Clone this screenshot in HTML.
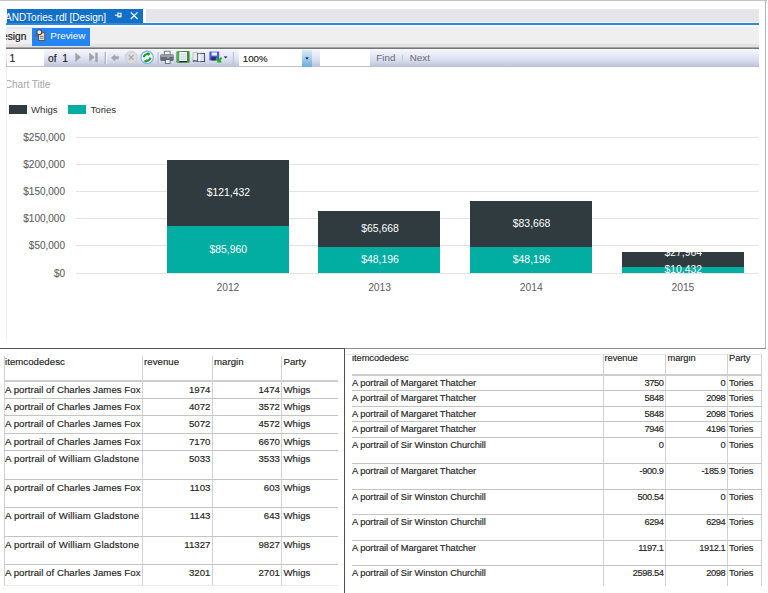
<!DOCTYPE html>
<html><head><meta charset="utf-8">
<style>
*{margin:0;padding:0;box-sizing:border-box}
html,body{width:768px;height:593px;overflow:hidden;background:#fff;font-family:"Liberation Sans",sans-serif;}
.a{position:absolute}
.t{position:absolute;white-space:nowrap;line-height:1}
.s{-webkit-text-stroke:0.16px currentColor}
.ls{letter-spacing:0.04px}
.lg{letter-spacing:0.17px}
.rs{letter-spacing:-0.06px}
.rn{letter-spacing:-0.4px}
.r{text-align:right}
.c{text-align:center}
</style></head><body>

<div class="a" style="left:0px;top:0px;width:767px;height:1px;background:#c4c4c4;"></div>
<div class="a" style="left:765px;top:0px;width:1px;height:349px;background:#b4b4b4;"></div>
<div class="a" style="left:146px;top:9px;width:613px;height:13px;background:#e6e6ea;"></div>
<div class="a" style="left:146px;top:22px;width:613px;height:1px;background:#f2f2f6;"></div>
<div class="a" style="left:7px;top:9px;width:136px;height:16px;background:#1370c8;overflow:hidden">
<div class="t" style="left:-2px;top:4px;font-size:10px;color:#fff;">ANDTories.rdl [Design]</div>
</div>
<div class="a" style="left:6px;top:23px;width:753px;height:2px;background:#3089d6;"></div>
<div class="a" style="left:6px;top:25px;width:753px;height:22px;background:#efeff0;"></div>
<div class="a" style="left:6px;top:25px;width:753px;height:2px;background:#f8f8f9;"></div>
<div class="a" style="left:6px;top:27px;width:26px;height:2px;background:#e4e4ea;"></div>
<div class="a" style="left:6px;top:44px;width:753px;height:3px;background:#e3e3e4;"></div>
<div class="a" style="left:6px;top:26px;width:26px;height:20px;overflow:hidden">
<div class="t" style="left:-4.0px;top:6px;font-size:10.2px;color:#222;-webkit-text-stroke:0.2px #222">esign</div>
</div>
<div class="a" style="left:32px;top:28px;width:58px;height:17.5px;background:#2384f2;"></div>
<div class="t" style="left:50.3px;top:31.2px;font-size:9.9px;color:#fff;">Preview</div>
<div class="a" style="left:6px;top:47px;width:753px;height:1px;background:#a4a4a4;"></div>
<div class="a" style="left:6px;top:48px;width:753px;height:1px;background:#767676;"></div>
<div class="a" style="left:6px;top:49px;width:753px;height:18px;background:linear-gradient(#f7f8fc,#e9ecf8 30%,#dde1f4 55%,#c9cde0 85%,#babed2);"></div>
<div class="a" style="left:7px;top:49px;width:37px;height:17px;background:#fff;"></div>
<div class="t" style="left:9.6px;top:54px;font-size:10.3px;color:#222;-webkit-text-stroke:0.15px #222">1</div>
<div class="t" style="left:48px;top:54px;font-size:10.3px;color:#222;-webkit-text-stroke:0.15px #222">of&nbsp; 1</div>
<div class="a" style="left:239px;top:49px;width:63px;height:17px;background:#fff;"></div>
<div class="t" style="left:242.8px;top:54.3px;font-size:9.7px;color:#222;-webkit-text-stroke:0.15px #222">100%</div>
<div class="a" style="left:302px;top:50px;width:10px;height:17px;background:linear-gradient(#dcecf8,#68ace0);"></div>
<div class="a" style="left:320px;top:49px;width:50px;height:17px;background:#fff;"></div>
<div class="t" style="left:376.3px;top:53.3px;font-size:9.8px;color:#6a6a6a;">Find</div>
<div class="a" style="left:402px;top:55px;width:1px;height:8px;background:#c8c8d0;"></div>
<div class="t" style="left:409.8px;top:53.3px;font-size:9.8px;color:#6a6a6a;">Next</div>
<div class="a" style="left:6px;top:67px;width:1px;height:274px;background:#eeeeee;"></div>
<div class="a" style="left:7px;top:70px;width:80px;height:25px;overflow:hidden">
<div class="t" style="left:-2.2px;top:9.6px;font-size:10px;color:#a6a6a6;">Chart Title</div>
</div>
<div class="a" style="left:8.8px;top:105.2px;width:18.2px;height:9.3px;background:#2f3b3f;"></div>
<div class="t" style="left:31px;top:105px;font-size:9.6px;color:#333;">Whigs</div>
<div class="a" style="left:67.5px;top:105.2px;width:18.5px;height:9.3px;background:#02ada2;"></div>
<div class="t" style="left:90.5px;top:105px;font-size:9.6px;color:#333;">Tories</div>
<div class="a" style="left:76px;top:272.6px;width:683px;height:1px;background:#e3e3e3;"></div>
<div class="t r" style="left:0px;width:65px;top:268.60px;font-size:10px;color:#5e5e5e;-webkit-text-stroke:0.1px #5e5e5e">$0</div>
<div class="a" style="left:76px;top:245.4px;width:683px;height:1px;background:#e3e3e3;"></div>
<div class="t r" style="left:0px;width:65px;top:241.40px;font-size:10px;color:#5e5e5e;-webkit-text-stroke:0.1px #5e5e5e">$50,000</div>
<div class="a" style="left:76px;top:218.2px;width:683px;height:1px;background:#e3e3e3;"></div>
<div class="t r" style="left:0px;width:65px;top:214.20px;font-size:10px;color:#5e5e5e;-webkit-text-stroke:0.1px #5e5e5e">$100,000</div>
<div class="a" style="left:76px;top:191.0px;width:683px;height:1px;background:#e3e3e3;"></div>
<div class="t r" style="left:0px;width:65px;top:187.00px;font-size:10px;color:#5e5e5e;-webkit-text-stroke:0.1px #5e5e5e">$150,000</div>
<div class="a" style="left:76px;top:163.8px;width:683px;height:1px;background:#e3e3e3;"></div>
<div class="t r" style="left:0px;width:65px;top:159.80px;font-size:10px;color:#5e5e5e;-webkit-text-stroke:0.1px #5e5e5e">$200,000</div>
<div class="a" style="left:76px;top:136.6px;width:683px;height:1px;background:#e3e3e3;"></div>
<div class="t r" style="left:0px;width:65px;top:132.60px;font-size:10px;color:#5e5e5e;-webkit-text-stroke:0.1px #5e5e5e">$250,000</div>
<div class="a" style="left:166.5px;top:226.34px;width:122px;height:46.76px;background:#02ada2;overflow:hidden"></div>
<div class="a" style="left:166.5px;top:160.28px;width:122px;height:66.06px;background:#2f3b3f;overflow:hidden"></div>
<div class="a" style="left:166.50px;top:160.28px;width:122px;height:112.82px;overflow:hidden">
<div class="t c" style="left:0.8px;width:122px;top:84.24px;font-size:10.4px;color:#fff">$85,960</div>
<div class="t c" style="left:0.8px;width:122px;top:27.83px;font-size:10.4px;color:#fff">$121,432</div>
</div>
<div class="t c" style="left:197.90px;width:60px;top:282.6px;font-size:10.3px;color:#5e5e5e">2012</div>
<div class="a" style="left:318.2px;top:246.88px;width:122px;height:26.22px;background:#02ada2;overflow:hidden"></div>
<div class="a" style="left:318.2px;top:211.16px;width:122px;height:35.72px;background:#2f3b3f;overflow:hidden"></div>
<div class="a" style="left:318.20px;top:211.16px;width:122px;height:61.94px;overflow:hidden">
<div class="t c" style="left:0.8px;width:122px;top:43.63px;font-size:10.4px;color:#fff">$48,196</div>
<div class="t c" style="left:0.8px;width:122px;top:12.66px;font-size:10.4px;color:#fff">$65,668</div>
</div>
<div class="t c" style="left:349.60px;width:60px;top:282.6px;font-size:10.3px;color:#5e5e5e">2013</div>
<div class="a" style="left:469.8px;top:246.88px;width:122px;height:26.22px;background:#02ada2;overflow:hidden"></div>
<div class="a" style="left:469.8px;top:201.37px;width:122px;height:45.52px;background:#2f3b3f;overflow:hidden"></div>
<div class="a" style="left:469.80px;top:201.37px;width:122px;height:71.73px;overflow:hidden">
<div class="t c" style="left:0.8px;width:122px;top:53.42px;font-size:10.4px;color:#fff">$48,196</div>
<div class="t c" style="left:0.8px;width:122px;top:17.56px;font-size:10.4px;color:#fff">$83,668</div>
</div>
<div class="t c" style="left:501.20px;width:60px;top:282.6px;font-size:10.3px;color:#5e5e5e">2014</div>
<div class="a" style="left:621.5px;top:267.42px;width:122px;height:5.68px;background:#02ada2;overflow:hidden"></div>
<div class="a" style="left:621.5px;top:252.21px;width:122px;height:15.21px;background:#2f3b3f;overflow:hidden"></div>
<div class="a" style="left:621.50px;top:252.21px;width:122px;height:20.89px;overflow:hidden">
<div class="t c" style="left:0.8px;width:122px;top:12.79px;font-size:10.4px;color:#fff">$10,432</div>
<div class="t c" style="left:0.8px;width:122px;top:-4.01px;font-size:10.4px;color:#fff">$27,964</div>
</div>
<div class="t c" style="left:652.90px;width:60px;top:282.6px;font-size:10.3px;color:#5e5e5e">2015</div>
<svg class="a" style="left:0;top:0" width="460" height="70" viewBox="0 0 460 70">
<path d="M114.8 15.3h3M117.9 12.6v5M118 13.2h3v3.4h-3" stroke="#fff" stroke-width="1.1" fill="none"/><path d="M118 16.4h3.2" stroke="#fff" stroke-width="1.5"/>
<path d="M130.8 12.3l6.7 6.7M137.5 12.3l-6.7 6.7" stroke="#fff" stroke-width="1.2"/>
<rect x="38.5" y="32.8" width="6.2" height="7.6" fill="#f4f1ea" stroke="#5e5040" stroke-width="1"/>
<path d="M39.7 36.3h3.8M39.7 38.2h3.8" stroke="#6a5a46" stroke-width="0.9"/>
<circle cx="39.3" cy="32.3" r="2.5" fill="#e6e6e6" stroke="#4f4740" stroke-width="1.1"/><circle cx="38.7" cy="31.7" r="0.9" fill="#fff"/>
<path d="M37.6 34l-2.6 2.6" stroke="#8a5a30" stroke-width="1.4"/>
<path d="M75.3 52.6L80.9 57.3L75.3 62Z" fill="#a3a3a6"/>
<path d="M89.2 52.6L94.6 57.3L89.2 62Z" fill="#a3a3a6"/><rect x="95.3" y="52.6" width="2.4" height="9.4" fill="#a3a3a6"/>
<rect x="104.8" y="52" width="1" height="12" fill="#8e94aa"/><rect x="105.8" y="52" width="1" height="12" fill="#fafbff"/>
<path d="M111 57.8L115.2 54v2.3h3.6v3h-3.6v2.3Z" fill="#a5a5a8"/>
<circle cx="131.2" cy="57.4" r="6.1" fill="#dcdcde" stroke="#c9c9cc" stroke-width="0.8"/>
<path d="M128.9 55.1l4.6 4.6M133.5 55.1l-4.6 4.6" stroke="#a9a9ac" stroke-width="1.3"/>
<circle cx="147.1" cy="57.4" r="6.2" fill="#eef4fc" stroke="#86b4ea" stroke-width="1.3"/>
<path d="M143.6 57.2Q144.6 54.2 148.2 53.8" stroke="#1f9e2a" stroke-width="2" fill="none"/><path d="M147.6 52.1L150.6 53.9L147.8 55.9Z" fill="#1f9e2a"/>
<path d="M150.6 57.6Q149.6 60.8 146 61.1" stroke="#1f9e2a" stroke-width="2" fill="none"/><path d="M146.6 59.2L143.6 61.1L146.4 63Z" fill="#1f9e2a"/>
<rect x="157.6" y="52" width="1" height="12" fill="#b6bacb"/>
<rect x="164.3" y="51.2" width="5.8" height="3.6" fill="#f4f6f8" stroke="#5c6470" stroke-width="0.8"/>
<rect x="160.2" y="54.2" width="13.5" height="6.8" rx="1.6" fill="#6a6c70"/>
<rect x="160.6" y="54.6" width="12.7" height="2.4" rx="1" fill="#9c9ea2"/>
<rect x="165.4" y="59.4" width="4.7" height="4.1" fill="#eef4fb" stroke="#4d5a6a" stroke-width="0.8"/>
<rect x="167" y="57" width="2.6" height="1.4" fill="#5aa8ec"/>
<rect x="176.6" y="51" width="13" height="11.8" rx="1" fill="#3f8d3f"/>
<rect x="176.6" y="51" width="6" height="11.8" rx="1" fill="#56a856"/>
<rect x="179.3" y="52" width="7.6" height="9.6" fill="#f4f7fb"/>
<rect x="179.3" y="61" width="7.6" height="1.2" fill="#22332a"/>
<path d="M180.5 54.3h5.2M180.5 56.1h5.2M180.5 57.9h5.2M180.5 59.7h5.2" stroke="#b4c4da" stroke-width="0.7"/>
<path d="M193 52.6L197.6 52.2V61.2L193 61.6Z" fill="#e9ebe6" stroke="#aab0b8" stroke-width="0.7"/>
<path d="M192.8 61.4Q194 60.2 197.8 61.2" stroke="#2a3a5a" stroke-width="1.1" fill="none"/>
<rect x="197.8" y="53.4" width="6.8" height="8.2" fill="#d4e2f6" stroke="#3c4048" stroke-width="0.9"/>
<rect x="198.3" y="53.6" width="2" height="7.8" fill="#f2f6fb"/>
<rect x="209.4" y="51.6" width="9.8" height="8.8" fill="#4a5ad6"/>
<rect x="211.6" y="52.4" width="5.4" height="3.2" fill="#eef0fb"/>
<rect x="211.2" y="57" width="4.6" height="3.4" fill="#2a2f5a"/>
<path d="M216.2 58.4l2.2 2.6 3.2-3.2" stroke="#22b422" stroke-width="2" fill="none"/><path d="M216.6 62.2l4.8 0.6-1-4.4Z" fill="#22b422"/>
<path d="M223.8 56.6h3.6l-1.8 1.8Z" fill="#111"/>
<rect x="232.8" y="52" width="1" height="12" fill="#b6bacb"/>
<path d="M305.2 57.6h3.6l-1.8 1.8Z" fill="#111"/>
</svg>
<div class="a" style="left:0px;top:348px;width:345px;height:1px;background:#565656;"></div>
<div class="a" style="left:345px;top:348px;width:421px;height:1px;background:#8e8e8e;"></div>
<div class="a" style="left:4px;top:356px;width:1px;height:229px;background:#d2d2d2;"></div>
<div class="a" style="left:142px;top:356px;width:1px;height:229px;background:#d2d2d2;"></div>
<div class="a" style="left:212px;top:356px;width:1px;height:229px;background:#d2d2d2;"></div>
<div class="a" style="left:281px;top:356px;width:1px;height:229px;background:#d2d2d2;"></div>
<div class="a" style="left:4px;top:380px;width:333.5px;height:2px;background:#cdcdcd;"></div>
<div class="a" style="left:4px;top:397.6px;width:333.5px;height:1px;background:#c4c4c4;"></div>
<div class="a" style="left:4px;top:415px;width:333.5px;height:1px;background:#c4c4c4;"></div>
<div class="a" style="left:4px;top:432.6px;width:333.5px;height:1px;background:#c4c4c4;"></div>
<div class="a" style="left:4px;top:449.8px;width:333.5px;height:1px;background:#c4c4c4;"></div>
<div class="a" style="left:4px;top:478.7px;width:333.5px;height:1px;background:#c4c4c4;"></div>
<div class="a" style="left:4px;top:507.1px;width:333.5px;height:1px;background:#c4c4c4;"></div>
<div class="a" style="left:4px;top:535.5px;width:333.5px;height:1px;background:#c4c4c4;"></div>
<div class="a" style="left:4px;top:564px;width:333.5px;height:1px;background:#c4c4c4;"></div>
<div class="a" style="left:4px;top:585px;width:333.5px;height:1px;background:#ececec;"></div>
<div class="t s ls" style="left:5.00px;top:357.03px;font-size:9.65px;color:#1e1e1e">itemcodedesc</div>
<div class="t s ls" style="left:144.00px;top:357.03px;font-size:9.65px;color:#1e1e1e">revenue</div>
<div class="t s ls" style="left:214.00px;top:357.03px;font-size:9.65px;color:#1e1e1e">margin</div>
<div class="t s ls" style="left:283.50px;top:357.03px;font-size:9.65px;color:#1e1e1e">Party</div>
<div class="t s ls" style="left:5.00px;top:385.33px;font-size:9.65px;color:#1e1e1e">A portrail of Charles James Fox</div>
<div class="t r s ls" style="left:150.50px;width:60px;top:385.33px;font-size:9.65px;color:#1e1e1e">1974</div>
<div class="t r s ls" style="left:220.00px;width:60px;top:385.33px;font-size:9.65px;color:#1e1e1e">1474</div>
<div class="t s ls" style="left:283.50px;top:385.33px;font-size:9.65px;color:#1e1e1e">Whigs</div>
<div class="t s ls" style="left:5.00px;top:401.93px;font-size:9.65px;color:#1e1e1e">A portrail of Charles James Fox</div>
<div class="t r s ls" style="left:150.50px;width:60px;top:401.93px;font-size:9.65px;color:#1e1e1e">4072</div>
<div class="t r s ls" style="left:220.00px;width:60px;top:401.93px;font-size:9.65px;color:#1e1e1e">3572</div>
<div class="t s ls" style="left:283.50px;top:401.93px;font-size:9.65px;color:#1e1e1e">Whigs</div>
<div class="t s ls" style="left:5.00px;top:419.33px;font-size:9.65px;color:#1e1e1e">A portrail of Charles James Fox</div>
<div class="t r s ls" style="left:150.50px;width:60px;top:419.33px;font-size:9.65px;color:#1e1e1e">5072</div>
<div class="t r s ls" style="left:220.00px;width:60px;top:419.33px;font-size:9.65px;color:#1e1e1e">4572</div>
<div class="t s ls" style="left:283.50px;top:419.33px;font-size:9.65px;color:#1e1e1e">Whigs</div>
<div class="t s ls" style="left:5.00px;top:436.93px;font-size:9.65px;color:#1e1e1e">A portrail of Charles James Fox</div>
<div class="t r s ls" style="left:150.50px;width:60px;top:436.93px;font-size:9.65px;color:#1e1e1e">7170</div>
<div class="t r s ls" style="left:220.00px;width:60px;top:436.93px;font-size:9.65px;color:#1e1e1e">6670</div>
<div class="t s ls" style="left:283.50px;top:436.93px;font-size:9.65px;color:#1e1e1e">Whigs</div>
<div class="t s lg" style="left:5.00px;top:454.13px;font-size:9.65px;color:#1e1e1e">A portrail of William Gladstone</div>
<div class="t r s ls" style="left:150.50px;width:60px;top:454.13px;font-size:9.65px;color:#1e1e1e">5033</div>
<div class="t r s ls" style="left:220.00px;width:60px;top:454.13px;font-size:9.65px;color:#1e1e1e">3533</div>
<div class="t s ls" style="left:283.50px;top:454.13px;font-size:9.65px;color:#1e1e1e">Whigs</div>
<div class="t s ls" style="left:5.00px;top:483.03px;font-size:9.65px;color:#1e1e1e">A portrail of Charles James Fox</div>
<div class="t r s ls" style="left:150.50px;width:60px;top:483.03px;font-size:9.65px;color:#1e1e1e">1103</div>
<div class="t r s ls" style="left:220.00px;width:60px;top:483.03px;font-size:9.65px;color:#1e1e1e">603</div>
<div class="t s ls" style="left:283.50px;top:483.03px;font-size:9.65px;color:#1e1e1e">Whigs</div>
<div class="t s lg" style="left:5.00px;top:511.43px;font-size:9.65px;color:#1e1e1e">A portrail of William Gladstone</div>
<div class="t r s ls" style="left:150.50px;width:60px;top:511.43px;font-size:9.65px;color:#1e1e1e">1143</div>
<div class="t r s ls" style="left:220.00px;width:60px;top:511.43px;font-size:9.65px;color:#1e1e1e">643</div>
<div class="t s ls" style="left:283.50px;top:511.43px;font-size:9.65px;color:#1e1e1e">Whigs</div>
<div class="t s lg" style="left:5.00px;top:539.83px;font-size:9.65px;color:#1e1e1e">A portrail of William Gladstone</div>
<div class="t r s ls" style="left:150.50px;width:60px;top:539.83px;font-size:9.65px;color:#1e1e1e">11327</div>
<div class="t r s ls" style="left:220.00px;width:60px;top:539.83px;font-size:9.65px;color:#1e1e1e">9827</div>
<div class="t s ls" style="left:283.50px;top:539.83px;font-size:9.65px;color:#1e1e1e">Whigs</div>
<div class="t s ls" style="left:5.00px;top:568.33px;font-size:9.65px;color:#1e1e1e">A portrail of Charles James Fox</div>
<div class="t r s ls" style="left:150.50px;width:60px;top:568.33px;font-size:9.65px;color:#1e1e1e">3201</div>
<div class="t r s ls" style="left:220.00px;width:60px;top:568.33px;font-size:9.65px;color:#1e1e1e">2701</div>
<div class="t s ls" style="left:283.50px;top:568.33px;font-size:9.65px;color:#1e1e1e">Whigs</div>
<div class="a" style="left:344px;top:348px;width:1px;height:245px;background:#505050;"></div>
<div class="a" style="left:345px;top:354px;width:417px;height:1px;background:#e6e6e6;"></div>
<div class="a" style="left:603px;top:354px;width:1px;height:232px;background:#d2d2d2;"></div>
<div class="a" style="left:665px;top:354px;width:1px;height:232px;background:#d2d2d2;"></div>
<div class="a" style="left:727px;top:354px;width:1px;height:232px;background:#d2d2d2;"></div>
<div class="a" style="left:761px;top:354px;width:1px;height:232px;background:#d2d2d2;"></div>
<div class="a" style="left:352px;top:374px;width:410px;height:2px;background:#cdcdcd;"></div>
<div class="a" style="left:352px;top:390px;width:410px;height:1px;background:#c4c4c4;"></div>
<div class="a" style="left:352px;top:405.5px;width:410px;height:1px;background:#c4c4c4;"></div>
<div class="a" style="left:352px;top:421px;width:410px;height:1px;background:#c4c4c4;"></div>
<div class="a" style="left:352px;top:436.5px;width:410px;height:1px;background:#c4c4c4;"></div>
<div class="a" style="left:352px;top:462.5px;width:410px;height:1px;background:#c4c4c4;"></div>
<div class="a" style="left:352px;top:488.5px;width:410px;height:1px;background:#c4c4c4;"></div>
<div class="a" style="left:352px;top:514px;width:410px;height:1px;background:#c4c4c4;"></div>
<div class="a" style="left:352px;top:539.5px;width:410px;height:1px;background:#c4c4c4;"></div>
<div class="a" style="left:352px;top:565px;width:410px;height:1px;background:#c4c4c4;"></div>
<div class="a" style="left:346px;top:355px;width:416px;height:19px;overflow:hidden">
<div class="t s rs" style="left:6.00px;top:-1.27px;font-size:9.3px;color:#1e1e1e">itemcodedesc</div>
<div class="t s rs" style="left:258.50px;top:-1.27px;font-size:9.3px;color:#1e1e1e">revenue</div>
<div class="t s rs" style="left:321.50px;top:-1.27px;font-size:9.3px;color:#1e1e1e">margin</div>
<div class="t s rs" style="left:383.00px;top:-1.27px;font-size:9.3px;color:#1e1e1e">Party</div>
</div>
<div class="t s rs" style="left:352.00px;top:379.03px;font-size:9.3px;color:#1e1e1e">A portrail of Margaret Thatcher</div>
<div class="t r s rn" style="left:603.50px;width:60px;top:379.03px;font-size:9.3px;color:#1e1e1e">3750</div>
<div class="t r s rn" style="left:665.40px;width:60px;top:379.03px;font-size:9.3px;color:#1e1e1e">0</div>
<div class="t s rs" style="left:729.00px;top:379.03px;font-size:9.3px;color:#1e1e1e">Tories</div>
<div class="t s rs" style="left:352.00px;top:394.03px;font-size:9.3px;color:#1e1e1e">A portrail of Margaret Thatcher</div>
<div class="t r s rn" style="left:603.50px;width:60px;top:394.03px;font-size:9.3px;color:#1e1e1e">5848</div>
<div class="t r s rn" style="left:665.40px;width:60px;top:394.03px;font-size:9.3px;color:#1e1e1e">2098</div>
<div class="t s rs" style="left:729.00px;top:394.03px;font-size:9.3px;color:#1e1e1e">Tories</div>
<div class="t s rs" style="left:352.00px;top:409.53px;font-size:9.3px;color:#1e1e1e">A portrail of Margaret Thatcher</div>
<div class="t r s rn" style="left:603.50px;width:60px;top:409.53px;font-size:9.3px;color:#1e1e1e">5848</div>
<div class="t r s rn" style="left:665.40px;width:60px;top:409.53px;font-size:9.3px;color:#1e1e1e">2098</div>
<div class="t s rs" style="left:729.00px;top:409.53px;font-size:9.3px;color:#1e1e1e">Tories</div>
<div class="t s rs" style="left:352.00px;top:425.03px;font-size:9.3px;color:#1e1e1e">A portrail of Margaret Thatcher</div>
<div class="t r s rn" style="left:603.50px;width:60px;top:425.03px;font-size:9.3px;color:#1e1e1e">7946</div>
<div class="t r s rn" style="left:665.40px;width:60px;top:425.03px;font-size:9.3px;color:#1e1e1e">4196</div>
<div class="t s rs" style="left:729.00px;top:425.03px;font-size:9.3px;color:#1e1e1e">Tories</div>
<div class="t s rs" style="left:352.00px;top:440.53px;font-size:9.3px;color:#1e1e1e">A portrail of Sir Winston Churchill</div>
<div class="t r s rn" style="left:603.50px;width:60px;top:440.53px;font-size:9.3px;color:#1e1e1e">0</div>
<div class="t r s rn" style="left:665.40px;width:60px;top:440.53px;font-size:9.3px;color:#1e1e1e">0</div>
<div class="t s rs" style="left:729.00px;top:440.53px;font-size:9.3px;color:#1e1e1e">Tories</div>
<div class="t s rs" style="left:352.00px;top:466.53px;font-size:9.3px;color:#1e1e1e">A portrail of Margaret Thatcher</div>
<div class="t r s rn" style="left:603.50px;width:60px;top:466.53px;font-size:9.3px;color:#1e1e1e">-900.9</div>
<div class="t r s rn" style="left:665.40px;width:60px;top:466.53px;font-size:9.3px;color:#1e1e1e">-185.9</div>
<div class="t s rs" style="left:729.00px;top:466.53px;font-size:9.3px;color:#1e1e1e">Tories</div>
<div class="t s rs" style="left:352.00px;top:492.53px;font-size:9.3px;color:#1e1e1e">A portrail of Sir Winston Churchill</div>
<div class="t r s rn" style="left:603.50px;width:60px;top:492.53px;font-size:9.3px;color:#1e1e1e">500.54</div>
<div class="t r s rn" style="left:665.40px;width:60px;top:492.53px;font-size:9.3px;color:#1e1e1e">0</div>
<div class="t s rs" style="left:729.00px;top:492.53px;font-size:9.3px;color:#1e1e1e">Tories</div>
<div class="t s rs" style="left:352.00px;top:518.03px;font-size:9.3px;color:#1e1e1e">A portrail of Sir Winston Churchill</div>
<div class="t r s rn" style="left:603.50px;width:60px;top:518.03px;font-size:9.3px;color:#1e1e1e">6294</div>
<div class="t r s rn" style="left:665.40px;width:60px;top:518.03px;font-size:9.3px;color:#1e1e1e">6294</div>
<div class="t s rs" style="left:729.00px;top:518.03px;font-size:9.3px;color:#1e1e1e">Tories</div>
<div class="t s rs" style="left:352.00px;top:543.53px;font-size:9.3px;color:#1e1e1e">A portrail of Margaret Thatcher</div>
<div class="t r s rn" style="left:603.50px;width:60px;top:543.53px;font-size:9.3px;color:#1e1e1e">1197.1</div>
<div class="t r s rn" style="left:665.40px;width:60px;top:543.53px;font-size:9.3px;color:#1e1e1e">1912.1</div>
<div class="t s rs" style="left:729.00px;top:543.53px;font-size:9.3px;color:#1e1e1e">Tories</div>
<div class="t s rs" style="left:352.00px;top:569.03px;font-size:9.3px;color:#1e1e1e">A portrail of Sir Winston Churchill</div>
<div class="t r s rn" style="left:603.50px;width:60px;top:569.03px;font-size:9.3px;color:#1e1e1e">2598.54</div>
<div class="t r s rn" style="left:665.40px;width:60px;top:569.03px;font-size:9.3px;color:#1e1e1e">2098</div>
<div class="t s rs" style="left:729.00px;top:569.03px;font-size:9.3px;color:#1e1e1e">Tories</div>
</body></html>
